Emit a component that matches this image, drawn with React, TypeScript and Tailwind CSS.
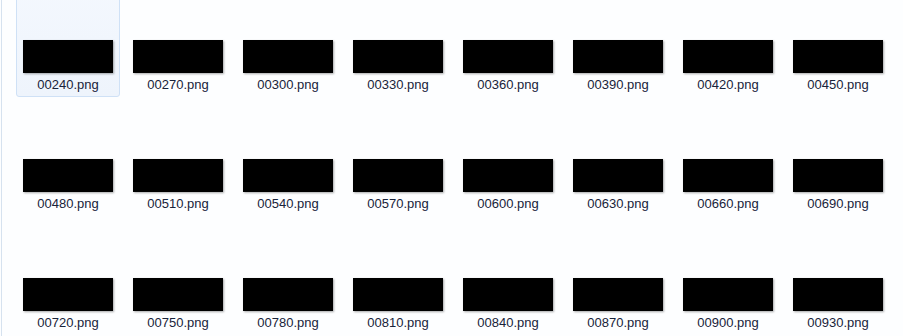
import React from "react";

const files = [
  "00240", "00270", "00300", "00330", "00360", "00390", "00420", "00450",
  "00480", "00510", "00540", "00570", "00600", "00630", "00660", "00690",
  "00720", "00750", "00780", "00810", "00840", "00870", "00900", "00930",
];

function FileTile({ name, selected }: { name: string; selected?: boolean }) {
  return (
    <div
      className={`flex h-[113px] flex-col items-center rounded-[3px] border ${
        selected
          ? "border-[#cfe1f6] bg-gradient-to-b from-[#f4f8fe] to-[#eef4fc]"
          : "border-transparent"
      }`}
    >
      <div className="flex h-[91px] w-full items-end justify-center pb-[3px]">
        <div className="h-[33px] w-[90px] bg-black shadow-[1px_1px_2px_rgba(0,0,0,0.35)]" />
      </div>
      <span
        className="mt-[1px] text-[13px] leading-[16px] text-[#18233a]"
        style={{ fontFamily: '"Liberation Sans", Arial, sans-serif' }}
      >
        {name}.png
      </span>
    </div>
  );
}

export default function App() {
  return (
    <div className="relative h-[336px] w-[903px] overflow-hidden bg-[#fdfeff]">
      <div className="absolute left-[1px] top-0 h-full w-px bg-[#d6e2ef]" />
      <div className="-mt-[16px] grid grid-cols-[repeat(8,104px)] gap-x-[6px] gap-y-[6px] pl-[16px]">
        {files.map((f, i) => (
          <FileTile key={f} name={f} selected={i === 0} />
        ))}
      </div>
    </div>
  );
}
